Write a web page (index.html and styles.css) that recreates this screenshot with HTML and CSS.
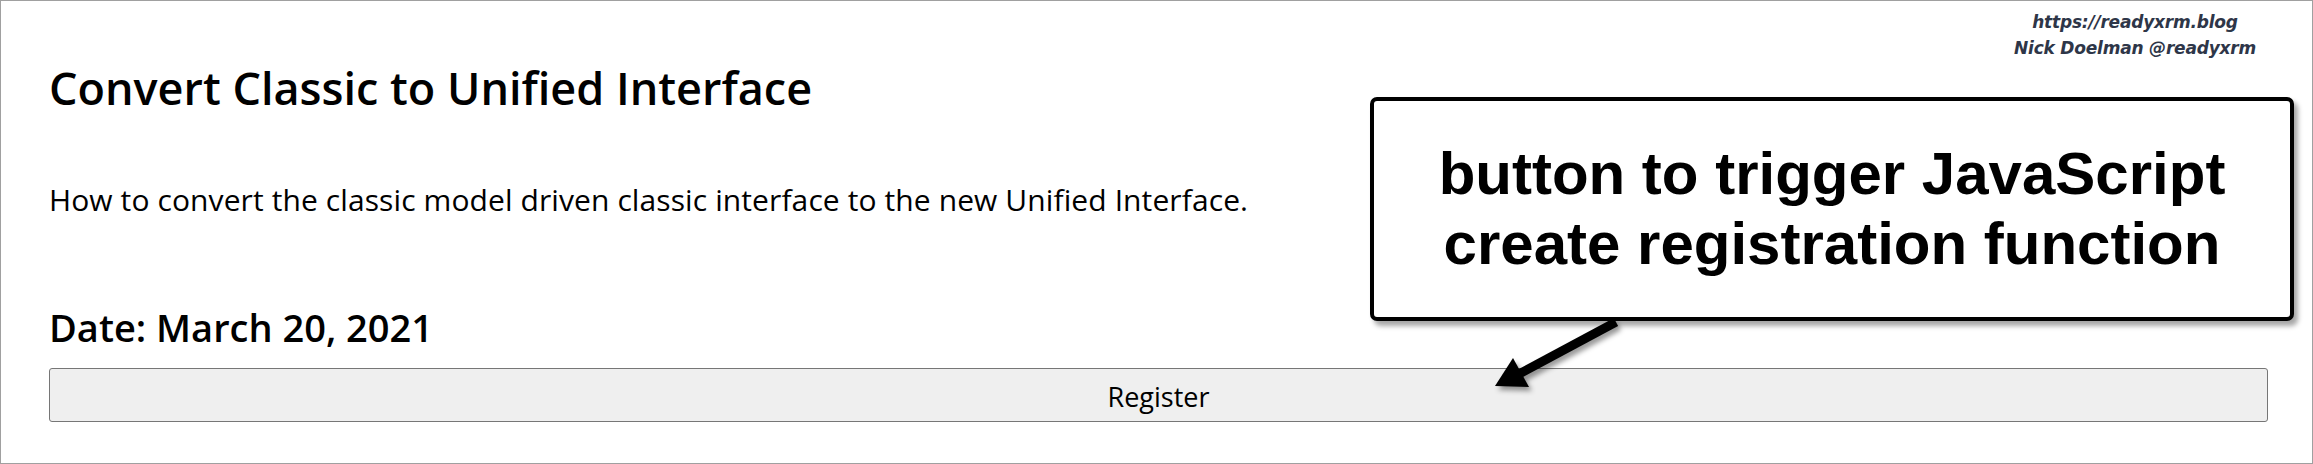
FILE: index.html
```html
<!DOCTYPE html>
<html lang="en">
<head>
    <meta charset="UTF-8">
    <title>Convert Classic to Unified Interface</title>
    <link rel="stylesheet" href="styles.css">
</head>
<body>
    <div class="frame">
        <div class="form">
            <h2 class="title">Convert Classic to Unified Interface</h2>
            <p class="desc">How to convert the classic model driven classic interface to the new Unified Interface.</p>
            <h3 class="date">Date: March 20, 2021</h3>
            <button class="register-btn" type="button">Register</button>
        </div>

        <div class="credit">
            <div>https://readyxrm.blog</div>
            <div>Nick Doelman @readyxrm</div>
        </div>

        <div class="callout">button to trigger JavaScript<br>create registration function</div>

        <svg class="pointer" width="170" height="90" viewBox="0 0 170 90">
            <defs>
                <filter id="arrow-shadow" x="-20%" y="-20%" width="150%" height="150%">
                    <feDropShadow dx="3" dy="4" stdDeviation="2.5" flood-color="#000" flood-opacity="0.4"/>
                </filter>
            </defs>
            <g filter="url(#arrow-shadow)">
                <line x1="141" y1="7" x2="44" y2="59" stroke="#000" stroke-width="9"/>
                <polygon points="20,71 38,43 54,72" fill="#000"/>
            </g>
        </svg>
    </div>
</body>
</html>
```

FILE: styles.css
```css
* {
    box-sizing: border-box;
}

body {
    margin: 0;
    background-color: #fff;
    font-family: 'Segoe UI', 'Open Sans', sans-serif;
    color: #000;
}

.frame {
    position: relative;
    width: 2313px;
    height: 464px;
    border: 1px solid #a0a0a0;
    overflow: hidden;
}

.form {
    display: flex;
    flex-direction: column;
    align-items: stretch;
    padding: 62px 44px 0 48px;
}

.title {
    margin: 0;
    font-size: 45px;
    line-height: 50px;
    font-weight: 600;
}

.desc {
    margin: 69px 0 0;
    font-size: 30px;
    line-height: 36px;
    font-weight: 400;
    letter-spacing: 0.1px;
}

.date {
    margin: 87px 0 0;
    font-size: 38px;
    line-height: 44px;
    font-weight: 600;
}

.register-btn {
    margin-top: 19px;
    height: 54px;
    padding: 3px 0 0;
    background-color: #efefef;
    border: 1px solid #767676;
    border-radius: 3px;
    font-family: 'Segoe UI', 'Open Sans', sans-serif;
    font-size: 27px;
    color: #000;
}

/* watermark top right */
.credit {
    position: absolute;
    top: 8px;
    left: 1984px;
    width: 300px;
    text-align: center;
    font-family: 'Comic Sans MS', 'DejaVu Sans', sans-serif;
    font-style: italic;
    font-weight: 700;
    font-size: 17px;
    line-height: 26px;
    color: #2e3648;
    letter-spacing: -0.2px;
}

/* annotation box */
.callout {
    position: absolute;
    left: 1369px;
    top: 96px;
    width: 924px;
    height: 224px;
    display: flex;
    align-items: center;
    justify-content: center;
    text-align: center;
    background-color: #fff;
    border: 4px solid #000;
    border-radius: 7px;
    box-shadow: 4px 5px 5px rgba(0, 0, 0, 0.35);
    font-family: 'Liberation Sans', Arial, sans-serif;
    font-weight: 700;
    font-size: 60px;
    line-height: 70px;
}

.pointer {
    position: absolute;
    left: 1474px;
    top: 314px;
}
```
